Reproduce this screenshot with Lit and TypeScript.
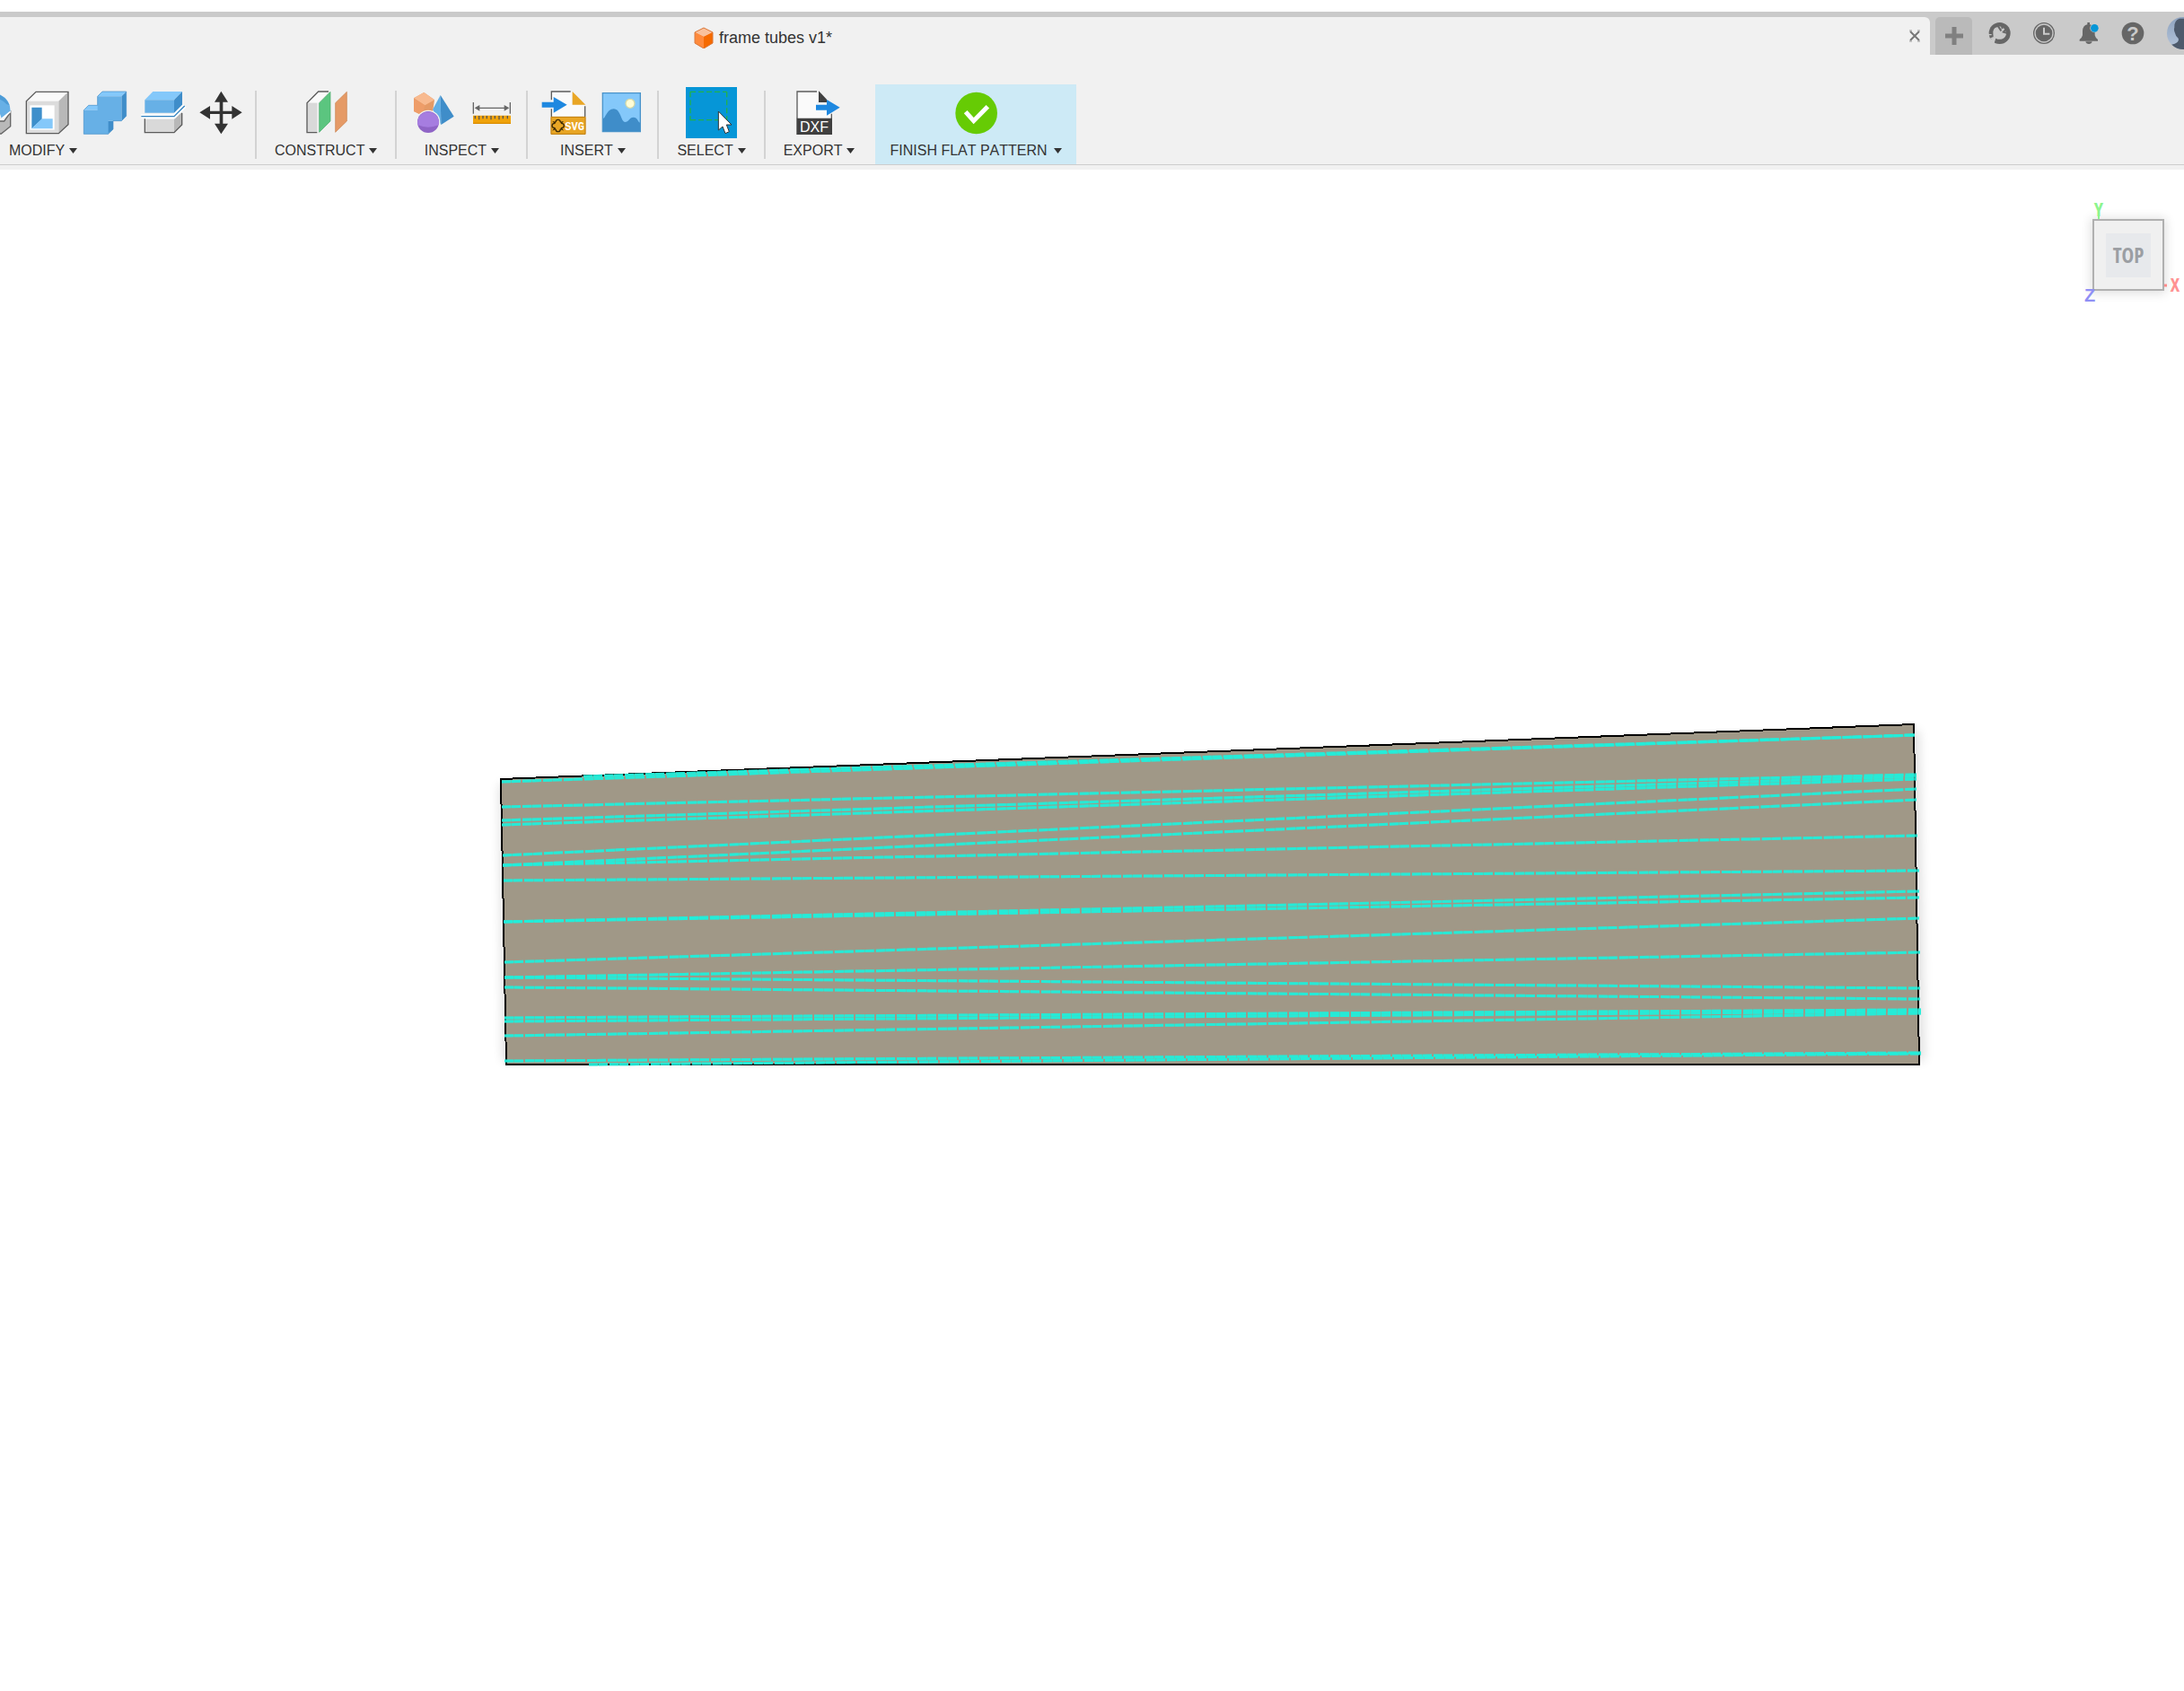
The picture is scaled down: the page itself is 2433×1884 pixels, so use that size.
import { LitElement, html, svg, css, SVGTemplateResult } from "lit";
import { customElement, property } from "lit/decorators.js";

interface Tool {
  name: string;
  box: string;
  art: SVGTemplateResult;
}

interface ToolGroup {
  label: string;
  kind?: string;
  tools: Tool[];
}

const groups: ToolGroup[] = [
  {
    label: "MODIFY",
    kind: "clipped",
    tools: [
      {
        name: "Fillet",
        box: "-123 51 171 171",
        art: svg`
          <path d="M-90 165 L14 165 L35 135 L35 182 L4 207 L-90 207Z" fill="#b9b9b9" stroke="#666" stroke-width="4"/>
          <path d="M-60 66 Q34 66 35 132 L5 156 Q-10 100 -60 100Z" fill="#67b0e6"/>
          <path d="M-60 66 Q12 64 32 112 L22 108 Q0 82 -60 82Z" fill="#4d9bd6"/>
          <path d="M35 133 L5 157" stroke="#fff" stroke-width="5"/>`,
      },
      {
        name: "Shell",
        box: "72 51 171 171",
        art: svg`
          <path d="M88 98 L120 67 H228 L196 98Z" fill="#fafafa"/>
          <path d="M196 98 L228 67 V176 L196 206Z" fill="#b8b8b8"/>
          <path d="M88 98 H196 V206 H88Z" fill="#dcdcdc"/>
          <path d="M100 112 H182 V194 H100Z" fill="#fff"/>
          <path d="M106 119 H140 V158 L106 190Z" fill="#3d8fcb"/>
          <path d="M140 157 H176 V190 H106Z" fill="#84c8fa"/>
          <path d="M88 98 L120 67 H228 V176 L196 206 H88Z" fill="none" stroke="#5c5c5c" stroke-width="4"/>`,
      },
      {
        name: "Combine",
        box: "267 51 171 171",
        art: svg`
          <path d="M406 82 L422 66 V148 L406 164Z M360 164 H378 V192 L360 208Z" fill="#3f8dc9"/>
          <path d="M326 82 L342 66 H422 L406 82Z M280 128 L296 112 H328 V128Z" fill="#84c8fa"/>
          <path d="M326 82 H406 V164 H362 V208 H280 V128 H326Z" fill="#67b0e6"/>
          <path d="M280 128 L296 112 H326 V82 L342 66 H422 V148 L406 164 H378 V192 L362 208 H280Z" fill="none" stroke="#3f8dc9" stroke-width="2"/>`,
      },
      {
        name: "Split body",
        box: "462 51 171 171",
        art: svg`
          <path d="M484 94 L511 66 H609 L582 94Z" fill="#84c8fa"/>
          <path d="M582 94 L609 66 V110 L582 137Z" fill="#3f8dc9"/>
          <path d="M484 94 H582 V137 H484Z" fill="#67b0e6"/>
          <path d="M484 159 H582 V203 H484Z" fill="#d9d9d9"/>
          <path d="M582 159 L608 134 V177 L582 203Z" fill="#b8b8b8"/>
          <path d="M484 157 V203 H582 L608 177 V138" fill="none" stroke="#5c5c5c" stroke-width="4"/>
          <path d="M472 149 H582 L617 114" fill="none" stroke="#fff" stroke-width="14"/>
          <path d="M472 149 H582 L617 114" fill="none" stroke="#3282c0" stroke-width="4"/>`,
      },
      {
        name: "Move",
        box: "657 51 171 171",
        art: svg`
          <path d="M739 65 L762 101 H745 V131 H775 V114 L809 136 L775 158 V141 H745 V173 H762 L739 208 L717 173 H734 V141 H702 V158 L667 136 L702 114 V131 H734 V101 H717Z" fill="#333"/>`,
      },
    ],
  },
  {
    label: "CONSTRUCT",
    tools: [
      {
        name: "Offset plane",
        box: "167 51 171 171",
        art: svg`
          <path d="M188 104 L226 66 H262 L224 104Z" fill="#fafafa"/>
          <path d="M188 104 H222 V203 H188Z" fill="#d9d9d9"/>
          <path d="M222 203 H188 V104 L226 66 H260" fill="none" stroke="#5c5c5c" stroke-width="4"/>
          <path d="M229 104 L266 67 V165 L229 202Z" fill="#5bc57f" stroke="#46a968" stroke-width="2"/>
          <path d="M283 104 L321 67 V165 L283 202Z" fill="#e59a66" stroke="#c9824f" stroke-width="2"/>`,
      },
    ],
  },
  {
    label: "INSPECT",
    tools: [
      {
        name: "Interference",
        box: "519 51 171 171",
        art: svg`
          <path d="M543 88 L577 69 L612 94 L606 134 L572 146 L543 132Z" fill="#e59a66"/>
          <path d="M543 88 L577 69 L612 94 L580 112Z" fill="#f8ba90"/>
          <path d="M543 90 L580 112 L572 146 L543 132Z" fill="#ee9d69"/>
          <path d="M632 78 L606 126 L634 177Z" fill="#62aee5"/>
          <path d="M632 78 L677 149 L634 177Z" fill="#3f8dc9"/>
          <circle cx="591" cy="168" r="40" fill="#f1f1f1"/>
          <circle cx="591" cy="168" r="36" fill="#8f64c6"/>
          <path d="M556 178 A36 36 0 1 1 626 178 Q591 192 556 178Z" fill="#a67de0"/>`,
      },
      {
        name: "Measure",
        box: "714 51 171 171",
        art: svg`
          <path d="M742 102 V140 M865 102 V140 M758 121 H850" stroke="#666" stroke-width="4"/>
          <path d="M746 121 L763 111 V131Z M862 121 L845 111 V131Z" fill="#666"/>
          <path d="M741 146 H867 V174 H741Z" fill="#f0a30a"/>
          <path d="M741 172 H867" stroke="#d98c00" stroke-width="4"/>
          <path d="M748 147 V157 M761 147 V160 M774 147 V157 M787 147 V157 M801 147 V160 M814 147 V157 M828 147 V160 M841 147 V157 M856 147 V157" stroke="#555" stroke-width="4"/>`,
      },
    ],
  },
  {
    label: "INSERT",
    tools: [
      {
        name: "Insert SVG",
        box: "58 51 171 171",
        art: svg`
          <path d="M104 66 H172 V110 H215 V150 H104Z" fill="#fafafa"/>
          <path d="M104 94 V66 H168 M104 124 V150 M216 115 V150" fill="none" stroke="#5c5c5c" stroke-width="4"/>
          <path d="M174 66 L218 110 H174Z" fill="#e9a625"/>
          <path d="M102 150 H218 V209 H102Z" fill="#e9a625"/>
          <path d="M103 151 H217 V208 H103Z" fill="none" stroke="#bd7d12" stroke-width="3"/>
          <path d="M72 101 H111 V84 L156 110 L111 137 V119 H72Z" fill="#1e88e0"/>
          <g fill="none" stroke="#3d2a05" stroke-width="4">
            <path d="M118 169 Q118 160 126 160 Q134 160 134 169 M118 191 Q118 200 126 200 Q134 200 134 191 M116 172 Q106 172 106 180 Q106 188 116 188 M136 172 Q146 172 146 180 Q146 188 136 188"/>
            <path d="M118 169 L112 168 L116 173 M134 169 L140 168 L136 173 M118 191 L112 193 L116 187 M134 191 L140 193 L136 187"/>
          </g>
          <text x="149" y="194" class="mono">SVG</text>`,
      },
      {
        name: "Canvas",
        box: "253 51 171 171",
        art: svg`
          <path d="M275 71 H401 V200 H275Z" fill="#84c8fa"/>
          <path d="M275 157 C286 156 288 124 312 124 C336 124 336 168 350 168 C362 168 364 152 378 152 C392 152 391 166 401 171 V200 H275Z" fill="#3f8dc9"/>
          <path d="M275 71 H401 V200 H275Z" fill="none" stroke="#4a94ca" stroke-width="4"/>
          <circle cx="367" cy="106" r="15" fill="#fffdd5" stroke="#d5d9a8" stroke-width="4"/>`,
      },
    ],
  },
  {
    label: "SELECT",
    tools: [
      {
        name: "Select",
        box: "552 51 171 171",
        art: svg`
          <path d="M552 51 H723 V222 H552Z" fill="#0696d7"/>
          <path d="M567 67 H689 M567 161 H660" stroke="#22b14c" stroke-width="4" stroke-dasharray="18 9" fill="none"/>
          <path d="M567 67 V163 M689 67 V163" stroke="#22b14c" stroke-width="4" stroke-dasharray="18 9" fill="none"/>
          <path d="M661 132 V195 L675 183 L684 206 L697 200 L688 177 H705Z" fill="#fff" stroke="#333" stroke-width="3"/>`,
      },
    ],
  },
  {
    label: "EXPORT",
    kind: "last",
    tools: [
      {
        name: "Export DXF",
        box: "129 51 171 171",
        art: svg`
          <path d="M141 66 H208 V108 H256 V156 H141Z" fill="#fafafa"/>
          <path d="M207 66 H141 V156 M256 140 V156" fill="none" stroke="#5c5c5c" stroke-width="4"/>
          <path d="M213 64 L240 92 V102 H213Z" fill="#404040"/>
          <path d="M139 155 H258 V210 H139Z" fill="#404040"/>
          <path d="M204 110 H240 V93 L284 119 L240 146 V128 H204Z" fill="#1e88e0"/>
          <text x="150" y="200" class="dxf">DXF</text>`,
      },
    ],
  },
  {
    label: "FINISH FLAT PATTERN",
    kind: "finish",
    tools: [
      {
        name: "Finish flat pattern",
        box: "652 51 171 171",
        art: svg`
          <circle cx="738" cy="138" r="70" fill="#66cb04"/>
          <path d="M702 134 L729 164 L776 116" fill="none" stroke="#fff" stroke-width="15"/>`,
      },
    ],
  },
];

/* Bend lines of the flat pattern: x and y of the start, x and y of the end. */
const bends: number[][] = [
  [559, 871, 2133, 819],
  [650, 865, 2133, 819],
  [559, 899, 2135, 863],
  [559, 914, 2135, 865],
  [559, 919, 2135, 868],
  [560, 953, 2135, 879],
  [560, 964, 2135, 891],
  [560, 964, 2136, 931],
  [561, 981, 2138, 970],
  [561, 1027, 2138, 993],
  [561, 1027, 2138, 1000],
  [562, 1072, 2138, 1023],
  [562, 1089, 2139, 1061],
  [562, 1089, 2139, 1101],
  [562, 1100, 2139, 1113],
  [562, 1134, 2140, 1125],
  [562, 1138, 2140, 1127],
  [562, 1154, 2140, 1129],
  [562, 1182, 2140, 1173],
  [656, 1186, 2140, 1174],
];

@customElement("tool-group")
class ToolGroupElement extends LitElement {
  @property({ attribute: false }) group!: ToolGroup;

  static styles = css`
    :host { display: block; flex: none; }
    .group {
      box-sizing: border-box;
      height: 89px;
      padding: 3px 11px 0;
      display: flex;
      flex-direction: column;
      align-items: center;
    }
    .clipped { margin-left: -52px; padding-right: 8px; }
    .clipped .label { align-self: flex-start; padding-left: 51px; }
    .last { padding-right: 14px; }
    .finish { background: #cdeaf6; padding: 3px 7px 0; }
    .finish .label { gap: 7px; }
    .tools { display: flex; gap: 8px; }
    button {
      border: 0;
      padding: 0;
      background: none;
      color: inherit;
      font: inherit;
      display: flex;
      align-items: center;
    }
    .label {
      margin-top: 4px;
      padding: 0 9px;
      gap: 5px;
      font-size: 16px;
      font-kerning: none;
      line-height: 20px;
      white-space: nowrap;
    }
    .icon { display: block; width: 57px; height: 57px; }
    .caret { width: 9px; height: 6px; }
    .mono { font: bold 36px "Liberation Mono", monospace; fill: #fff; }
    .dxf { font: 48px "Liberation Sans", Arial, sans-serif; fill: #fff; }
  `;

  render() {
    const g = this.group;
    return html`
      <div class="group ${g.kind ?? ""}">
        <div class="tools">
          ${g.tools.map(
            (t) => html`<button aria-label=${t.name}>
              <svg class="icon" viewBox=${t.box}>${t.art}</svg>
            </button>`
          )}
        </div>
        <button class="label">
          ${g.label}
          <svg class="caret" viewBox="0 0 9 6"><path d="M0 0H9L4.5 6Z" fill="#333" /></svg>
        </button>
      </div>
    `;
  }
}

@customElement("view-cube")
class ViewCube extends LitElement {
  static styles = css`
    :host { display: block; }
    .cube { display: block; width: 120px; height: 134px; }
    .face { font: bold 23px "Liberation Sans Narrow", "Open Sans Condensed", "Liberation Sans", sans-serif; fill: #9b9ea3; }
    .axis { font: bold 22px "Liberation Sans Narrow", "Open Sans Condensed", "Liberation Sans", sans-serif; }
    .depth { font: bold 20px "Liberation Sans", Arial, sans-serif; }
    .glow { filter: blur(6px); }
  `;

  render() {
    return html`
      <svg class="cube" viewBox="2313 208 120 134">
        <rect class="glow" x="2329" y="243" width="84" height="84" fill="#000" opacity="0.12" />
        <path d="M2338 240V246" stroke="#8df58d" stroke-width="2" />
        <path d="M2409 318H2414" stroke="#ff8a8a" stroke-width="3" />
        <rect x="2332" y="245" width="78" height="78" fill="#f0f0f0" stroke="#b0b0b0" stroke-width="2" />
        <rect x="2346" y="260" width="50" height="49" fill="#e7e9ec" />
        <text class="face" x="2371" y="293" text-anchor="middle">TOP</text>
        <text class="axis" x="2338" y="241" text-anchor="middle" fill="#8df58d">Y</text>
        <text class="axis" x="2423" y="325" text-anchor="middle" fill="#ff9292">X</text>
        <text class="depth" x="2328" y="336" text-anchor="middle" fill="#8f8ff5">Z</text>
      </svg>
    `;
  }
}

@customElement("app-root")
class AppRoot extends LitElement {
  static styles = css`
    :host {
      display: flex;
      flex-direction: column;
      min-height: 100vh;
      overflow: hidden;
      background: #fff;
      color: #333;
      font-family: "Liberation Sans", Arial, sans-serif;
    }
    button {
      border: 0;
      padding: 0;
      background: none;
      display: block;
    }
    svg { display: block; }
    .tabs {
      margin-top: 13px;
      padding-top: 6px;
      height: 42px;
      display: flex;
      background: #cacaca;
      overflow: hidden;
    }
    .tab {
      flex: 1;
      margin-left: -452px;
      display: flex;
      align-items: flex-start;
      background: #f1f1f1;
      border-top-right-radius: 6px;
    }
    .title {
      flex: 1;
      margin-right: -36px;
      padding-top: 11px;
      display: flex;
      justify-content: center;
      gap: 6px;
      font-size: 18px;
      line-height: 24px;
    }
    .cube { width: 22px; height: 24px; }
    .close { padding: 14px 10px 0; position: relative; }
    .close svg { width: 14px; height: 14px; }
    .add {
      width: 41px;
      margin: 0 12px 0 6px;
      background: #bababa;
      border-radius: 5px 5px 0 0;
      display: grid;
      place-items: center;
    }
    .add svg { width: 20px; height: 20px; }
    .status { display: flex; gap: 14px; align-items: flex-start; }
    .status svg, .avatar svg { width: 36px; height: 36px; }
    .avatar { align-self: flex-start; margin: 0 -17px 0 19px; }
    .help { font: bold 66px "Liberation Sans", Arial, sans-serif; fill: #cacaca; }
    .ribbon {
      padding-top: 33px;
      display: flex;
      background: #f1f1f1;
      border-bottom: 1px solid #cdcdcd;
    }
    .rule {
      flex: none;
      width: 2px;
      height: 76px;
      margin-top: 7px;
      background: #d3d3d3;
    }
    .strip { height: 5px; background: #f1f1f1; }
    .canvas { flex: 1; position: relative; display: flex; min-height: 0; }
    .scene { position: absolute; inset: 0; width: 100%; height: 100%; }
    .shade { filter: blur(6px); }
    .navigator { position: absolute; top: 19px; right: 0; }
  `;

  private renderTabs() {
    return html`
      <header class="tabs">
        <div class="tab">
          <div class="title">
            <svg class="cube" viewBox="0 0 22 24">
              <path d="M11 1L21 6V18L11 24L1 18V6Z" fill="#ff7a1f" />
              <path d="M11 1L21 6L11 11L1 6Z" fill="#f9c19c" />
              <path d="M11 11L21 6V18L11 24Z" fill="#f56a00" />
              <path d="M1 6L11 11V24L1 18Z" fill="#ff8a3c" />
              <path d="M11 1L21 6V18L11 24L1 18V6Z" fill="none" stroke="#d97b40" />
            </svg>
            <span>frame tubes v1*</span>
          </div>
          <button class="close" aria-label="Close document">
            <svg viewBox="0 0 14 14">
              <path d="M2 2L12 12M12 2L2 12" fill="none" stroke="#777" stroke-width="2" />
              <path d="M1 1H4M10 1H13M1 13H4M10 13H13" stroke="#999" />
            </svg>
          </button>
        </div>
        <button class="add" aria-label="New document">
          <svg viewBox="0 0 20 20"><path d="M10 0V20M0 10H20" stroke="#808080" stroke-width="5" /></svg>
        </button>
        <div class="status">
          <button aria-label="Extensions">
            <svg viewBox="327 57 108 108">
              <circle cx="383" cy="111" r="36" fill="#666" />
              <path d="M361 112 Q360 94 374 91 Q384 86 394 92 L401 99 Q404 106 405 114 Q402 128 388 131 Q378 133 370 128 L364 146 L350 136 L362 124Z" fill="#cacaca" />
              <path d="M376 85 L388 103 M390 86 L392 96 M392 106 L412 112 M396 108 L404 96" stroke="#666" stroke-width="6" />
              <path d="M345 116 H356 M350 131 L362 125" stroke="#cacaca" stroke-width="4" />
            </svg>
          </button>
          <button aria-label="Job status">
            <svg viewBox="477 57 108 108">
              <circle cx="531" cy="111" r="34" fill="none" stroke="#666" stroke-width="4" />
              <circle cx="531" cy="111" r="28" fill="#666" />
              <path d="M531 92V113H550" fill="none" stroke="#cacaca" stroke-width="6" />
            </svg>
          </button>
          <button aria-label="Notifications">
            <svg viewBox="627 57 108 108">
              <path d="M676 75H684V82Q700 84 701 104V118Q703 127 711 132V137H650V132Q658 127 660 118V104Q661 84 676 82Z" fill="#666" />
              <path d="M670 139H692Q690 147 681 147Q672 147 670 139Z" fill="#666" />
              <circle cx="700" cy="94" r="15" fill="#cacaca" />
              <circle cx="700" cy="94" r="13" fill="#0696d7" />
            </svg>
          </button>
          <button aria-label="Help">
            <svg viewBox="777 57 108 108">
              <circle cx="828" cy="111" r="37" fill="#666" />
              <text class="help" x="828" y="135" text-anchor="middle">?</text>
            </svg>
          </button>
        </div>
        <button class="avatar" aria-label="Account">
          <svg viewBox="942 57 108 108">
            <clipPath id="round"><circle cx="996" cy="111" r="54" /></clipPath>
            <linearGradient id="sky" x2="0" y2="1">
              <stop offset="0" stop-color="#8ea3bf" />
              <stop offset="1" stop-color="#b4c4da" />
            </linearGradient>
            <g clip-path="url(#round)">
              <path d="M942 57H1050V165H942Z" fill="url(#sky)" />
              <path d="M1050 62H984Q966 68 967 92Q964 98 968 108Q971 122 980 128Q984 140 968 146L955 150L975 170H1050Z" fill="#4d5a6c" />
            </g>
          </svg>
        </button>
      </header>
    `;
  }

  render() {
    return html`
      ${this.renderTabs()}
      <nav class="ribbon">
        ${groups.map(
          (g, i) => html`
            <tool-group .group=${g}></tool-group>
            ${i < groups.length - 2 ? html`<div class="rule"></div>` : ""}
          `
        )}
      </nav>
      <div class="strip"></div>
      <main class="canvas">
        <svg class="scene" viewBox="0 189 2433 1695">
          <path class="shade" d="M556 874L2138 814L2144 1182L560 1182Z" fill="#000" opacity="0.12" />
          <path
            d="M558 868L2132 807L2138 1186H564Z"
            fill="#a09887"
            stroke="#000"
            stroke-width="2"
            shape-rendering="crispEdges"
          />
          ${bends.map(
            ([x1, y1, x2, y2]) => svg`
              <line x1=${x1} y1=${y1} x2=${x2} y2=${y2} stroke="#3fdcc8" stroke-width="3" opacity="0.75"
                stroke-dasharray="21 2" />
              <line x1=${x1} y1=${y1} x2=${x2} y2=${y2} stroke="#1cf2de" stroke-width="3" opacity="0.8"
                stroke-dasharray="10 1 10 2" />`
          )}
        </svg>
        <view-cube class="navigator"></view-cube>
      </main>
    `;
  }
}
